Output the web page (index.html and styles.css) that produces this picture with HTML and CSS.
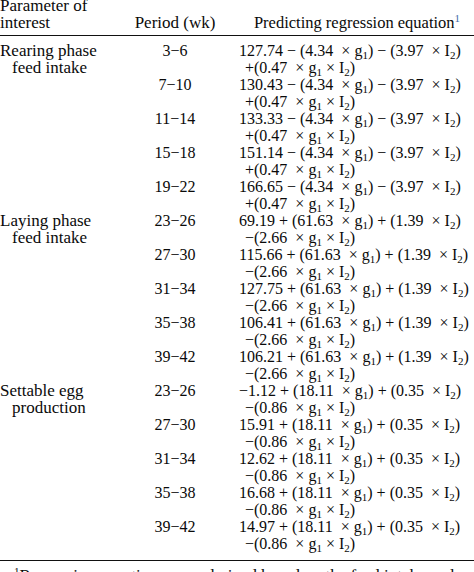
FILE: index.html
```html
<!DOCTYPE html>
<html>
<head>
<meta charset="utf-8">
<link rel="stylesheet" href="styles.css">
</head>
<body>
<div class="page">
  <div class="head grid">
    <div class="c1 txt">Parameter of<br>interest</div>
    <div class="c2 bottom txt">Period (wk)</div>
    <div class="c3 bottom center">Predicting regression equation<sup class="note">1</sup></div>
  </div>
  <div class="rule"></div>
  <div class="body">
    <div class="row grid">
      <div class="c1 param txt">Rearing phase<br>feed intake</div>
      <div class="c2">3−6</div>
      <div class="c3"><span class="l1">127.74 − (4.34&nbsp;&nbsp;× g<sub>1</sub>) − (3.97&nbsp;&nbsp;× I<sub>2</sub>)</span><span class="l2">+(0.47&nbsp;&nbsp;× g<sub>1</sub> × I<sub>2</sub>)</span></div>
    </div>
    <div class="row grid">
      <div class="c1"></div>
      <div class="c2">7−10</div>
      <div class="c3"><span class="l1">130.43 − (4.34&nbsp;&nbsp;× g<sub>1</sub>) − (3.97&nbsp;&nbsp;× I<sub>2</sub>)</span><span class="l2">+(0.47&nbsp;&nbsp;× g<sub>1</sub> × I<sub>2</sub>)</span></div>
    </div>
    <div class="row grid">
      <div class="c1"></div>
      <div class="c2">11−14</div>
      <div class="c3"><span class="l1">133.33 − (4.34&nbsp;&nbsp;× g<sub>1</sub>) − (3.97&nbsp;&nbsp;× I<sub>2</sub>)</span><span class="l2">+(0.47&nbsp;&nbsp;× g<sub>1</sub> × I<sub>2</sub>)</span></div>
    </div>
    <div class="row grid">
      <div class="c1"></div>
      <div class="c2">15−18</div>
      <div class="c3"><span class="l1">151.14 − (4.34&nbsp;&nbsp;× g<sub>1</sub>) − (3.97&nbsp;&nbsp;× I<sub>2</sub>)</span><span class="l2">+(0.47&nbsp;&nbsp;× g<sub>1</sub> × I<sub>2</sub>)</span></div>
    </div>
    <div class="row grid">
      <div class="c1"></div>
      <div class="c2">19−22</div>
      <div class="c3"><span class="l1">166.65 − (4.34&nbsp;&nbsp;× g<sub>1</sub>) − (3.97&nbsp;&nbsp;× I<sub>2</sub>)</span><span class="l2">+(0.47&nbsp;&nbsp;× g<sub>1</sub> × I<sub>2</sub>)</span></div>
    </div>

    <div class="row grid">
      <div class="c1 param txt">Laying phase<br>feed intake</div>
      <div class="c2">23−26</div>
      <div class="c3"><span class="l1">69.19 + (61.63&nbsp;&nbsp;× g<sub>1</sub>) + (1.39&nbsp;&nbsp;× I<sub>2</sub>)</span><span class="l2">−(2.66&nbsp;&nbsp;× g<sub>1</sub> × I<sub>2</sub>)</span></div>
    </div>
    <div class="row grid">
      <div class="c1"></div>
      <div class="c2">27−30</div>
      <div class="c3"><span class="l1">115.66 + (61.63&nbsp;&nbsp;× g<sub>1</sub>) + (1.39&nbsp;&nbsp;× I<sub>2</sub>)</span><span class="l2">−(2.66&nbsp;&nbsp;× g<sub>1</sub> × I<sub>2</sub>)</span></div>
    </div>
    <div class="row grid">
      <div class="c1"></div>
      <div class="c2">31−34</div>
      <div class="c3"><span class="l1">127.75 + (61.63&nbsp;&nbsp;× g<sub>1</sub>) + (1.39&nbsp;&nbsp;× I<sub>2</sub>)</span><span class="l2">−(2.66&nbsp;&nbsp;× g<sub>1</sub> × I<sub>2</sub>)</span></div>
    </div>
    <div class="row grid">
      <div class="c1"></div>
      <div class="c2">35−38</div>
      <div class="c3"><span class="l1">106.41 + (61.63&nbsp;&nbsp;× g<sub>1</sub>) + (1.39&nbsp;&nbsp;× I<sub>2</sub>)</span><span class="l2">−(2.66&nbsp;&nbsp;× g<sub>1</sub> × I<sub>2</sub>)</span></div>
    </div>
    <div class="row grid">
      <div class="c1"></div>
      <div class="c2">39−42</div>
      <div class="c3"><span class="l1">106.21 + (61.63&nbsp;&nbsp;× g<sub>1</sub>) + (1.39&nbsp;&nbsp;× I<sub>2</sub>)</span><span class="l2">−(2.66&nbsp;&nbsp;× g<sub>1</sub> × I<sub>2</sub>)</span></div>
    </div>

    <div class="row grid">
      <div class="c1 param txt">Settable egg<br>production</div>
      <div class="c2">23−26</div>
      <div class="c3"><span class="l1">−1.12 + (18.11&nbsp;&nbsp;× g<sub>1</sub>) + (0.35&nbsp;&nbsp;× I<sub>2</sub>)</span><span class="l2">−(0.86&nbsp;&nbsp;× g<sub>1</sub> × I<sub>2</sub>)</span></div>
    </div>
    <div class="row grid">
      <div class="c1"></div>
      <div class="c2">27−30</div>
      <div class="c3"><span class="l1">15.91 + (18.11&nbsp;&nbsp;× g<sub>1</sub>) + (0.35&nbsp;&nbsp;× I<sub>2</sub>)</span><span class="l2">−(0.86&nbsp;&nbsp;× g<sub>1</sub> × I<sub>2</sub>)</span></div>
    </div>
    <div class="row grid">
      <div class="c1"></div>
      <div class="c2">31−34</div>
      <div class="c3"><span class="l1">12.62 + (18.11&nbsp;&nbsp;× g<sub>1</sub>) + (0.35&nbsp;&nbsp;× I<sub>2</sub>)</span><span class="l2">−(0.86&nbsp;&nbsp;× g<sub>1</sub> × I<sub>2</sub>)</span></div>
    </div>
    <div class="row grid">
      <div class="c1"></div>
      <div class="c2">35−38</div>
      <div class="c3"><span class="l1">16.68 + (18.11&nbsp;&nbsp;× g<sub>1</sub>) + (0.35&nbsp;&nbsp;× I<sub>2</sub>)</span><span class="l2">−(0.86&nbsp;&nbsp;× g<sub>1</sub> × I<sub>2</sub>)</span></div>
    </div>
    <div class="row grid">
      <div class="c1"></div>
      <div class="c2">39−42</div>
      <div class="c3"><span class="l1">14.97 + (18.11&nbsp;&nbsp;× g<sub>1</sub>) + (0.35&nbsp;&nbsp;× I<sub>2</sub>)</span><span class="l2">−(0.86&nbsp;&nbsp;× g<sub>1</sub> × I<sub>2</sub>)</span></div>
    </div>
  </div>
  <div class="rule bottom-rule"></div>
  <p class="foot"><sup>1</sup>Regression equations were derived based on the feed intake and settable egg production data.</p>
</div>
</body>
</html>
```

FILE: styles.css
```css
html, body {
  margin: 0;
  padding: 0;
  background: #fff;
}
body {
  width: 474px;
  height: 572px;
  overflow: hidden;
  font-family: "Liberation Serif", "Times New Roman", serif;
  font-size: 16px;
  line-height: 17px;
  color: #0a0a0a;
}
.page {
  margin-top: -3px;
}
.grid {
  display: grid;
  grid-template-columns: 120px 110px 1fr;
}
.txt {
  font-size: 17px;
}
.c1 {
  text-align: left;
}
.c2 {
  text-align: center;
}
.c3 {
  padding-left: 9px;
  white-space: nowrap;
}
.bottom {
  align-self: end;
}
.center {
  text-align: center;
  font-size: 16.5px;
  padding-left: 10px;
  padding-right: 0;
}
.head {
  padding-bottom: 4px;
}
.rule {
  height: 1px;
  background: #111;
}
.body {
  padding-top: 6px;
  padding-bottom: 8px;
}
.row {
  height: 34px;
}
.param {
  padding-left: 12px;
  text-indent: -12px;
}
.l1, .l2 {
  display: block;
}
.l2 {
  padding-left: 6px;
}
sub {
  font-size: 11px;
  line-height: 0;
  vertical-align: -3px;
}
sup {
  font-size: 11px;
  line-height: 0;
  vertical-align: 6px;
}
.note {
  color: #3e6aa8;
}
.foot {
  margin: 6px 0 0 14px;
  font-size: 17px;
  white-space: nowrap;
}
```
